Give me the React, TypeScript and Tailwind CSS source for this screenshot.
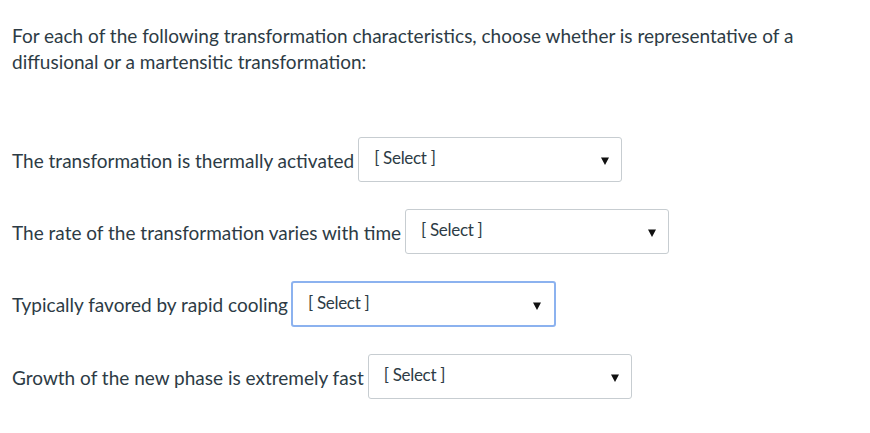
const rows = [
  { label: "The transformation is thermally activated", focused: false },
  { label: "The rate of the transformation varies with time", focused: false },
  { label: "Typically favored by rapid cooling", focused: true },
  { label: "Growth of the new phase is extremely fast", focused: false },
];

function Arrow() {
  return (
    <svg width="8" height="8" viewBox="0 0 8 8" className="shrink-0">
      <path d="M0 0.5 H8 L4 8 Z" fill="#111" />
    </svg>
  );
}

export default function App() {
  return (
    <div className="min-h-[433px] w-[870px] bg-white px-3 pt-[23px] font-['Lato',sans-serif] text-[19px] text-[#2d3b45]">
      <p className="leading-[26px]">
        For each of the following transformation characteristics, choose whether is representative of a
        diffusional or a martensitic transformation:
      </p>

      <div className="mt-[62px] flex flex-col gap-[27px]">
        {rows.map((r) => (
          <div key={r.label} className="flex items-start">
            <span className="mt-[11px] whitespace-nowrap leading-[26px]">{r.label}</span>
            <div
              className={
                r.focused
                  ? "ml-[3px] flex h-[46px] w-[265px] items-start justify-between rounded-[3px] border-2 border-[#8cb2ef] pl-[15px] pr-[13px]"
                  : "ml-[4px] flex h-[45px] w-[264px] items-start justify-between rounded-[3px] border border-[#c7cdd1] pl-[15px] pr-[12px]"
              }
            >
              <span className="mt-[7px] text-[17px] leading-[26px] tracking-[-0.3px] text-[#2d3b45]">[ Select ]</span>
              <span className="mt-[19px]">
                <Arrow />
              </span>
            </div>
          </div>
        ))}
      </div>
    </div>
  );
}
